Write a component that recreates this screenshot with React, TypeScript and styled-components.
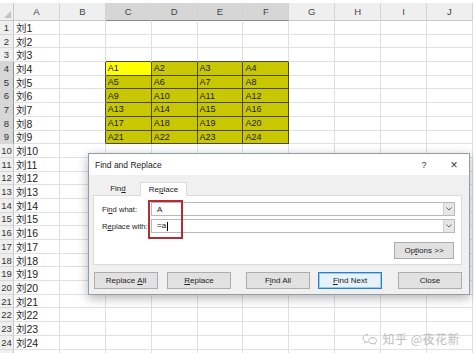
import React from "react";
import styled, { createGlobalStyle, css } from "styled-components";

// 전역 스타일
const GlobalStyle = createGlobalStyle`
  html, body {
    margin: 0;
    padding: 0;
    background: #ffffff;
  }
  body {
    width: 474px;
    height: 353px;
    overflow: hidden;
    font-family: "Liberation Sans", "Noto Sans CJK SC", sans-serif;
  }
`;

const COLS = ["A", "B", "C", "D", "E", "F", "G", "H", "I", "J"];
const ROWS = 24;

const Page = styled.div`
  position: relative;
  width: 474px;
  height: 353px;
  overflow: hidden;
  padding-top: 3px;
  box-sizing: border-box;
  background: #fff;
`;

// 시트 그리드
const Sheet = styled.div`
  display: grid;
  grid-template-columns: 14px repeat(10, 45.9px);
  grid-template-rows: 18px;
  grid-auto-rows: 13.7px;
`;

const Corner = styled.div`
  background: #efefef;
  border-right: 1px solid #c8c8c8;
  border-bottom: 1px solid #c8c8c8;
  position: relative;
  &::after {
    content: "";
    position: absolute;
    right: 2px;
    bottom: 2px;
    border-left: 7px solid transparent;
    border-bottom: 7px solid #c4c4c4;
  }
`;

const ColHead = styled.div<{ $active: boolean }>`
  display: flex;
  align-items: center;
  justify-content: center;
  font-size: 9.5px;
  color: #444;
  background: ${({ $active }) => ($active ? "#d6d6d6" : "#efefef")};
  border-right: 1px solid #d4d4d4;
  border-bottom: 1px solid ${({ $active }) => ($active ? "#8a8a8a" : "#c8c8c8")};
  box-sizing: border-box;
`;

const RowHead = styled.div<{ $active: boolean }>`
  display: flex;
  align-items: center;
  justify-content: center;
  font-size: 9.5px;
  color: #333;
  background: ${({ $active }) => ($active ? "#d6d6d6" : "#efefef")};
  border-right: 1px solid ${({ $active }) => ($active ? "#7a9a7a" : "#c8c8c8")};
  border-bottom: 1px solid #d8d8d8;
  box-sizing: border-box;
`;

type Fill = "none" | "olive" | "bright";

const Cell = styled.div<{ $fill: Fill; $right: string; $bottom: string }>`
  display: flex;
  align-items: center;
  padding-left: 2px;
  font-size: 9px;
  color: #1a1a1a;
  white-space: nowrap;
  overflow: hidden;
  box-sizing: border-box;
  border-right: 1px solid ${({ $right }) => $right};
  border-bottom: 1px solid ${({ $bottom }) => $bottom};
  ${({ $fill }) =>
    $fill === "olive" &&
    css`
      background: #c9c700;
    `}
  ${({ $fill }) =>
    $fill === "bright" &&
    css`
      background: #ffff00;
    `}
`;

const NameCell = styled(Cell)`
  font-size: 10.5px;
  color: #222;
`;

// 대화상자
const Dialog = styled.div`
  position: absolute;
  left: 88px;
  top: 153px;
  width: 382px;
  height: 142px;
  box-sizing: border-box;
  border: 1px solid #8d9cb0;
  background: #f0f0f0;
  box-shadow: 0 3px 10px rgba(0, 0, 0, 0.3);
  display: flex;
  flex-direction: column;
  font-family: "Liberation Sans", sans-serif;
  color: #222;
`;

const TitleBar = styled.div`
  height: 21px;
  background: #fff;
  display: flex;
  align-items: center;
  padding: 0 0 0 6px;
  font-size: 8.5px;
`;

const Title = styled.span`
  flex: 1;
`;

const TitleButton = styled.span<{ $size: number }>`
  width: 30px;
  text-align: center;
  font-size: ${({ $size }) => $size}px;
  color: #333;
`;

const Body = styled.div`
  flex: 1;
  padding: 7px 7px 0 4px;
  display: flex;
  flex-direction: column;
`;

const TabStrip = styled.div`
  display: flex;
  height: 13px;
  padding-left: 3px;
`;

const Tab = styled.div<{ $active: boolean }>`
  width: ${({ $active }) => ($active ? 47 : 44)}px;
  display: flex;
  align-items: center;
  justify-content: center;
  font-size: 8px;
  box-sizing: border-box;
  ${({ $active }) =>
    $active &&
    css`
      background: #fff;
      border: 1px solid #dadada;
      border-bottom: none;
      margin-bottom: -1px;
      position: relative;
      z-index: 1;
    `}
`;

const Panel = styled.div`
  position: relative;
  height: 70px;
  box-sizing: border-box;
  background: #fff;
  border: 1px solid #dadada;
  padding: 6px 6px 0 8px;
  display: flex;
  flex-direction: column;
  gap: 3px;
`;

const FieldRow = styled.div`
  display: flex;
  align-items: center;
  height: 14px;
`;

const Label = styled.span`
  width: 49px;
  flex-shrink: 0;
  font-size: 7.6px;
  white-space: nowrap;
`;

const Input = styled.div`
  flex: 1;
  height: 14px;
  box-sizing: border-box;
  border: 1px solid #b9b9b9;
  display: flex;
  align-items: center;
  padding-left: 5px;
  font-size: 8px;
`;

const InputText = styled.span`
  flex: 1;
`;

const Caret = styled.span`
  display: inline-block;
  width: 1px;
  height: 9px;
  background: #000;
  vertical-align: middle;
  margin-left: 1px;
`;

const DropButton = styled.span`
  width: 10px;
  height: 12px;
  background: #e6e6e6;
  border-left: 1px solid #cfcfcf;
  display: flex;
  align-items: center;
  justify-content: center;
`;

const Highlight = styled.div`
  position: absolute;
  left: 54px;
  top: 4px;
  width: 35px;
  height: 39px;
  box-sizing: border-box;
  border: 2px solid #b42d35;
`;

const OptionsRow = styled.div`
  display: flex;
  justify-content: flex-end;
  margin-top: 6px;
  padding-right: 1px;
`;

const ButtonRow = styled.div`
  display: flex;
  margin-top: 7px;
  padding-left: 1px;
`;

const Button = styled.div<{ $focused?: boolean; $gap?: number; $w?: number }>`
  width: ${({ $w }) => $w ?? 64}px;
  height: 17px;
  margin-left: ${({ $gap }) => $gap ?? 0}px;
  box-sizing: border-box;
  display: flex;
  align-items: center;
  justify-content: center;
  font-size: 8px;
  color: #222;
  white-space: pre;
  background: ${({ $focused }) => ($focused ? "#e5f1fb" : "#e1e1e1")};
  border: 1px solid ${({ $focused }) => ($focused ? "#2a7fc8" : "#adadad")};
  ${({ $focused }) =>
    $focused &&
    css`
      box-shadow: inset 0 0 0 1px #9cc7ec;
    `}
`;

const U = styled.span`
  text-decoration: underline;
`;

// 워터마크
const Watermark = styled.div`
  position: absolute;
  right: 14px;
  bottom: 6px;
  display: flex;
  align-items: center;
  gap: 4px;
  font-size: 12px;
  color: #bdbdbd;
  font-family: "Noto Sans CJK SC", sans-serif;
  letter-spacing: 0.5px;
`;

function Chevron() {
  return (
    <svg width="6" height="4" viewBox="0 0 6 4">
      <path d="M0.5 0.5 L3 3 L5.5 0.5" fill="none" stroke="#555" strokeWidth="0.9" />
    </svg>
  );
}

const inTable = (r: number, c: number) => r >= 4 && r <= 9 && c >= 2 && c <= 5;

export default function App() {
  const cells: React.ReactNode[] = [];
  cells.push(<Corner key="corner" />);
  COLS.forEach((c, i) => {
    cells.push(
      <ColHead key={"h" + c} $active={i >= 2 && i <= 5}>
        {c}
      </ColHead>
    );
  });

  for (let r = 1; r <= ROWS + 1; r++) {
    // 마지막 줄은 화면 아래로 잘리는 빈 줄
    const filler = r > ROWS;
    cells.push(
      <RowHead key={"r" + r} $active={r >= 4 && r <= 9}>
        {filler ? "" : r}
      </RowHead>
    );
    COLS.forEach((_, c) => {
      const here = inTable(r, c);
      const right = here || inTable(r, c + 1) ? "#4a4a2a" : "#e0e0e0";
      const bottom = here || inTable(r + 1, c) ? "#4a4a2a" : "#e0e0e0";
      let fill: Fill = "none";
      let text = "";
      if (here) {
        fill = r === 4 && c === 2 ? "bright" : "olive";
        text = "A" + ((r - 4) * 4 + (c - 2) + 1);
      }
      if (c === 0) {
        cells.push(
          <NameCell key={r + "-" + c} $fill={fill} $right={right} $bottom={bottom}>
            {filler ? "" : "刘" + r}
          </NameCell>
        );
      } else {
        cells.push(
          <Cell key={r + "-" + c} $fill={fill} $right={right} $bottom={bottom}>
            {text}
          </Cell>
        );
      }
    });
  }

  return (
    <>
      <GlobalStyle />
      <Page>
        <Sheet>{cells}</Sheet>

        <Dialog>
          <TitleBar>
            <Title>Find and Replace</Title>
            <TitleButton $size={9}>?</TitleButton>
            <TitleButton $size={12}>×</TitleButton>
          </TitleBar>
          <Body>
            <TabStrip>
              <Tab $active={false}>
                Fin<U>d</U>
              </Tab>
              <Tab $active>
                Re<U>p</U>lace
              </Tab>
            </TabStrip>
            <Panel>
              <FieldRow>
                <Label>
                  Fi<U>n</U>d what:
                </Label>
                <Input>
                  <InputText>A</InputText>
                  <DropButton>
                    <Chevron />
                  </DropButton>
                </Input>
              </FieldRow>
              <FieldRow>
                <Label>
                  R<U>e</U>place with:
                </Label>
                <Input>
                  <InputText>
                    =a
                    <Caret />
                  </InputText>
                  <DropButton>
                    <Chevron />
                  </DropButton>
                </Input>
              </FieldRow>
              <OptionsRow>
                <Button $w={60}>
                  Op<U>t</U>ions &gt;&gt;
                </Button>
              </OptionsRow>
              <Highlight />
            </Panel>
            <ButtonRow>
              <Button>
                {"Replace "}
                <U>A</U>ll
              </Button>
              <Button $gap={9}>
                <U>R</U>eplace
              </Button>
              <Button $gap={15}>
                F<U>i</U>nd All
              </Button>
              <Button $gap={8} $focused>
                <U>F</U>ind Next
              </Button>
              <Button $gap={16}>Close</Button>
            </ButtonRow>
          </Body>
        </Dialog>

        <Watermark>
          <svg width="16" height="12" viewBox="0 0 16 12">
            <path
              d="M6 1.5 C3 1.5 1 3.3 1 5.4 C1 6.6 1.7 7.6 2.8 8.3 L2.4 9.8 L4.2 8.9 C4.8 9.1 5.4 9.2 6 9.2"
              fill="none"
              stroke="#bbb"
              strokeWidth="1"
            />
            <path
              d="M10.5 4.5 C8.2 4.5 6.6 6 6.6 7.6 C6.6 9.3 8.2 10.7 10.5 10.7 C11 10.7 11.4 10.6 11.8 10.5 L13.3 11.2 L12.9 10 C13.9 9.4 14.5 8.6 14.5 7.6 C14.5 6 12.8 4.5 10.5 4.5 Z"
              fill="none"
              stroke="#bbb"
              strokeWidth="1"
            />
          </svg>
          知乎 @夜花新
        </Watermark>
      </Page>
    </>
  );
}
